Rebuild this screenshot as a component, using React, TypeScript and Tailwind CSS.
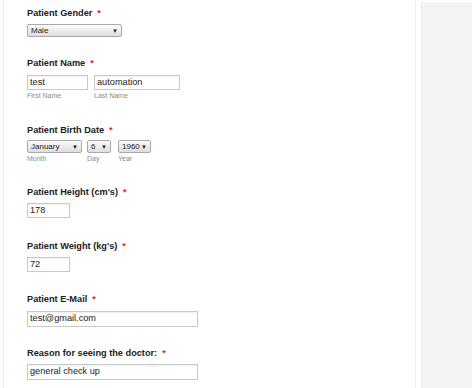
import React from 'react';

const Label: React.FC<{ text: string; className?: string }> = ({ text, className }) => (
  <div className={`h-[12px] leading-[12px] text-[9.2px] font-bold text-[#222] ${className || ''}`}>
    {text}
    <span className="ml-[5px] text-[#e4252d]">*</span>
  </div>
);

const FakeSelect: React.FC<{ value: string; width: string }> = ({ value, width }) => (
  <div
    className={`${width} h-[13px] flex items-center justify-between pl-[3px] pr-[3px] border border-[#a9a9a9] rounded-[2px] bg-gradient-to-b from-[#fbfbfb] to-[#dedede] text-[8px] text-[#222]`}
  >
    <span className="leading-none">{value}</span>
    <span className="text-[6px] leading-none">▼</span>
  </div>
);

const TextBox: React.FC<{ value: string; width: string; height?: string }> = ({ value, width, height }) => (
  <div
    className={`${width} ${height || 'h-[15px]'} flex items-center px-[2px] border border-[#c9c9c9] bg-white text-[9.2px] text-[#222] shadow-[inset_0_1px_1px_rgba(0,0,0,0.06)]`}
  >
    {value}
  </div>
);

const Sub: React.FC<{ text: string; width: string }> = ({ text, width }) => (
  <div className={`${width} text-[7px] leading-[10px] text-[#8a8a8a]`}>{text}</div>
);

export default function App() {
  return (
    <div
      className="w-[474px] h-[388px] bg-white flex overflow-hidden"
      style={{ fontFamily: '"Liberation Sans", Arial, sans-serif' }}
    >
      <div className="w-[3px] shrink-0" />
      <div className="w-[413px] shrink-0 h-full border-l border-[#ececec] border-r pl-[23px] pt-[7px]">
        {/* gender */}
        <Label text="Patient Gender" />
        <div className="mt-[5px]">
          <FakeSelect value="Male" width="w-[95px]" />
        </div>

        {/* name */}
        <Label text="Patient Name" className="mt-[20px]" />
        <div className="mt-[6px] flex gap-[6px]">
          <TextBox value="test" width="w-[61px]" />
          <TextBox value="automation" width="w-[86px]" />
        </div>
        <div className="mt-[1px] flex gap-[6px]">
          <Sub text="First Name" width="w-[61px]" />
          <Sub text="Last Name" width="w-[86px]" />
        </div>

        {/* birth date */}
        <Label text="Patient Birth Date" className="mt-[23px]" />
        <div className="mt-[4px] flex">
          <FakeSelect value="January" width="w-[55px]" />
          <div className="ml-[5px]">
            <FakeSelect value="6" width="w-[24px]" />
          </div>
          <div className="ml-[7px]">
            <FakeSelect value="1960" width="w-[33px]" />
          </div>
        </div>
        <div className="mt-[1px] flex">
          <Sub text="Month" width="w-[60px]" />
          <Sub text="Day" width="w-[31px]" />
          <Sub text="Year" width="w-[33px]" />
        </div>

        {/* height */}
        <Label text="Patient Height (cm's)" className="mt-[22px]" />
        <div className="mt-[5px]">
          <TextBox value="178" width="w-[43px]" />
        </div>

        {/* weight */}
        <Label text="Patient Weight (kg's)" className="mt-[22px]" />
        <div className="mt-[5px]">
          <TextBox value="72" width="w-[43px]" />
        </div>

        {/* email */}
        <Label text="Patient E-Mail" className="mt-[21px]" />
        <div className="mt-[6px]">
          <TextBox value="test@gmail.com" width="w-[171px]" height="h-[16px]" />
        </div>

        {/* reason */}
        <Label text="Reason for seeing the doctor:" className="mt-[20px]" />
        <div className="mt-[5px]">
          <TextBox value="general check up" width="w-[171px]" height="h-[16px]" />
        </div>
      </div>
      <div className="w-[5px] shrink-0" />
      <div className="w-[51px] shrink-0 mt-[2px] h-full bg-[#f4f4f4] border-l border-[#ebebeb]" />
    </div>
  );
}
